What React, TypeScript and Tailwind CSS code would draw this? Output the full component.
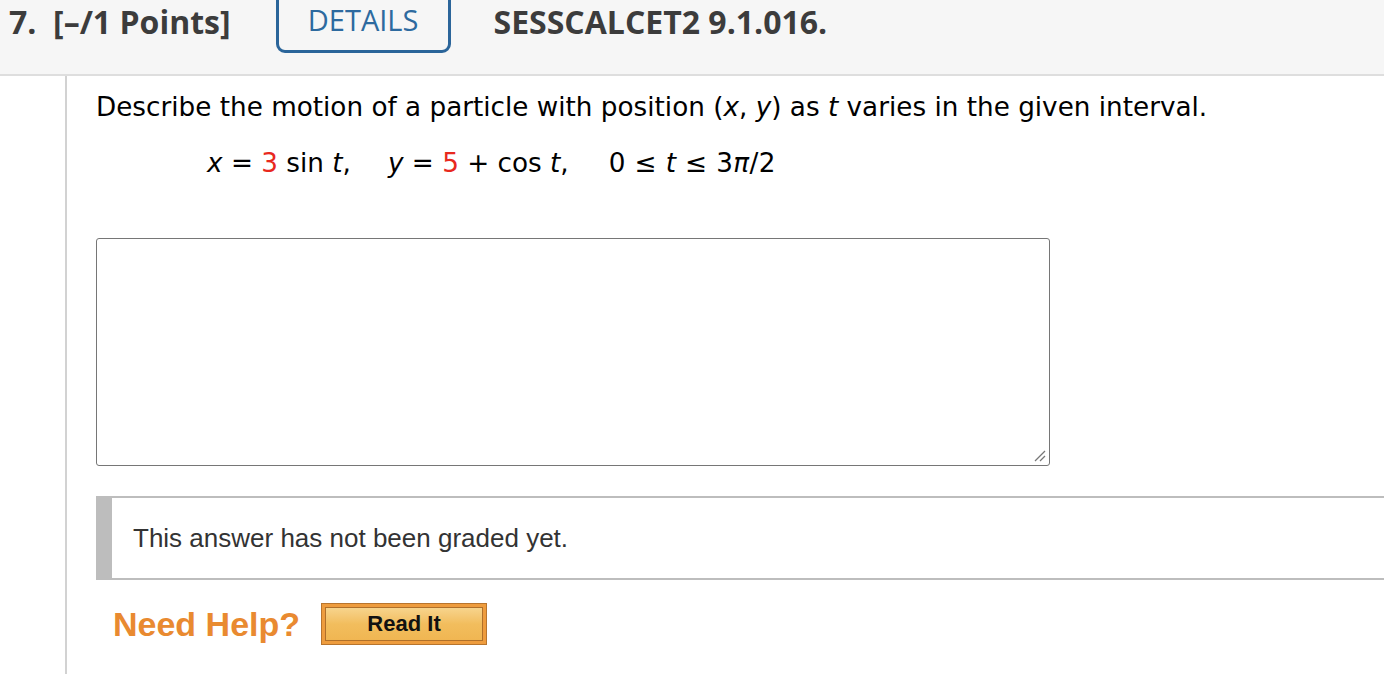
import React from "react";

export default function App() {
  const verdana = { fontFamily: '"DejaVu Sans", Verdana, sans-serif' };
  return (
    <div className="w-[1384px] h-[674px] overflow-hidden bg-white relative">
      {/* Header */}
      <div
        className="h-[76px] bg-[#f6f6f6] border-b-2 border-[#dedede] flex items-start text-[#3c3c3c]"
        style={{ fontFamily: '"Open Sans", sans-serif' }}
      >
        <div className="pl-[9px] text-[32px] font-bold leading-[44px] whitespace-pre">
          7.  [–/1 Points]
        </div>
        <div className="ml-[45px] -mt-[10px] w-[175px] h-[63px] border-[3px] border-[#2b659a] rounded-b-[9px] flex items-end justify-center pb-[10px]">
          <span className="text-[29px] leading-[40px] font-medium text-[#2d6a9f]">DETAILS</span>
        </div>
        <div className="ml-[43px] text-[32px] font-bold leading-[44px]">SESSCALCET2 9.1.016.</div>
      </div>

      {/* Body */}
      <div className="flex h-[598px]">
        <div className="w-[67px] border-r-2 border-[#d2d2d2] shrink-0" />
        <div className="pl-[29px] flex-1 min-w-0">
          <div className="pt-[16px] text-[26.25px] leading-[30px] text-black whitespace-nowrap" style={verdana}>
            Describe the motion of a particle with position (<i>x</i>, <i>y</i>) as <i>t</i> varies in the given interval.
          </div>
          <div className="pt-[26px] pl-[111px] text-[26.25px] leading-[30px] text-black whitespace-pre flex" style={verdana}>
            <span><i>x</i> = <span className="text-[#e8281e]">3</span> sin <i>t</i>,</span>
            <span className="ml-[37px]"><i>y</i> = <span className="text-[#e8281e]">5</span> + cos <i>t</i>,</span>
            <span className="ml-[40px] tracking-[0.4px]">0 ≤ <i>t</i> ≤ 3<i>π</i>/2</span>
          </div>
          <div className="mt-[60px] w-[954px] h-[228px] border border-[#767676] rounded-[3px] relative">
            <svg className="absolute right-[2px] bottom-[2px]" width="14" height="14" viewBox="0 0 14 14">
              <line x1="2" y1="12" x2="12" y2="2" stroke="#777" strokeWidth="1.3" />
              <line x1="7" y1="12" x2="12" y2="7" stroke="#777" strokeWidth="1.3" />
            </svg>
          </div>
          <div className="mt-[30px] h-[84px] flex border-y-2 border-[#bdbdbd]">
            <div className="w-[16px] bg-[#bdbdbd] -my-[2px]" />
            <div
              className="pl-[21px] flex items-center text-[26px] text-[#333]"
              style={{ fontFamily: '"Liberation Sans", Arial, sans-serif' }}
            >
              This answer has not been graded yet.
            </div>
          </div>
          <div className="mt-[23px] flex items-center" style={{ fontFamily: '"Liberation Sans", Arial, sans-serif' }}>
            <span className="ml-[17px] text-[34px] font-bold text-[#e98a30] leading-[42px]">Need Help?</span>
            <div className="ml-[21px] w-[166px] h-[42px] border border-[#b8752e] bg-[#ee9c3e] p-[3px]">
              <div className="w-full h-full border border-[#b0702a] bg-gradient-to-b from-[#f7d48c] via-[#f2bd5d] to-[#f0b652] flex items-center justify-center">
                <span className="text-[22px] font-bold text-[#111] leading-none">Read It</span>
              </div>
            </div>
          </div>
        </div>
      </div>
    </div>
  );
}
